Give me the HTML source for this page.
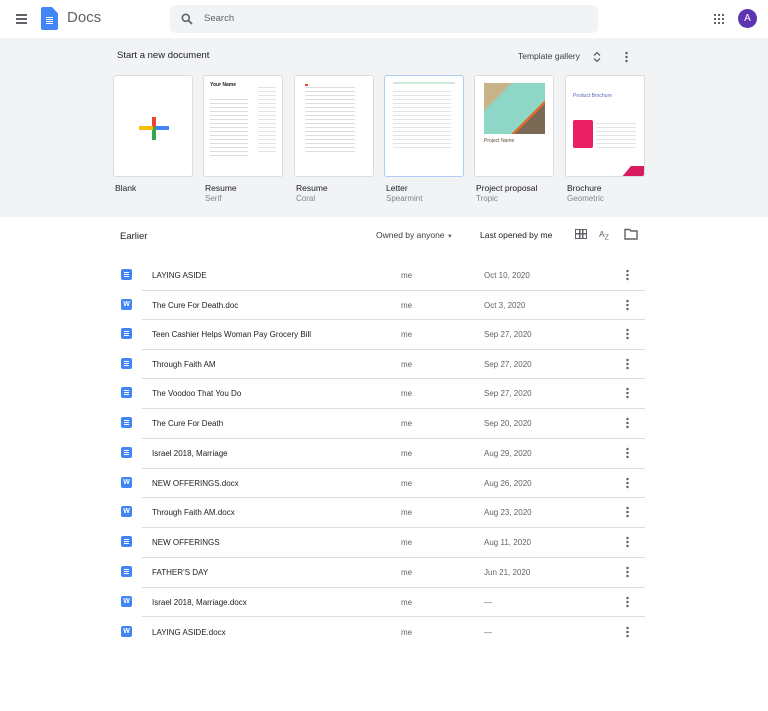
<!DOCTYPE html>
<html><head><style>
*{margin:0;padding:0;box-sizing:border-box}
body{width:768px;height:711px;background:#fff;font-family:"Liberation Sans",Arial,sans-serif;position:relative;overflow:hidden;color:#202124}
.a{position:absolute}
.hdr{left:0;top:0;width:768px;height:38px;background:#fff}
.gray{left:0;top:38px;width:768px;height:179px;background:#f1f3f4}
.card{top:75px;width:80px;height:102px;background:#fff;border:1px solid #dadce0;border-radius:3px;overflow:hidden}
.lbl{font-size:8.5px;color:#202124;top:183px}
.sub{font-size:8px;color:#80868b;top:194px}
.row{position:absolute;left:0;width:768px;height:29px;font-size:8px}
.row .n{position:absolute;left:152px;top:-4px;color:#202124}
.row .m{position:absolute;left:401px;top:-4px;color:#5f6368}
.row .d{position:absolute;left:484px;top:-4px;color:#5f6368}
.ic{position:absolute;left:121px;top:-6px;width:11px;height:11px;border-radius:2px;background:#4285f4;color:#fff;font-size:7px;text-align:center;line-height:11px;font-weight:bold}
.ic.g::after{content:"";position:absolute;left:3px;top:3px;width:5px;height:1px;background:#fff;box-shadow:0 2px 0 #fff,0 4px 0 #fff}
.dots{position:absolute;left:626px;top:-6px;width:3px;height:12px;background:radial-gradient(circle,#5f6368 1.1px,transparent 1.4px) 0 0/3px 4px}
.tl{height:1px;background:#ddd;position:absolute}
</style></head><body>
<div class="a hdr"></div>
<div class="a" style="left:16px;top:14px;width:11px;height:2px;background:#5f6368;box-shadow:0 4px 0 #5f6368,0 8px 0 #5f6368"></div>
<div class="a" style="left:41px;top:7px;width:17px;height:23px;background:#4285f4;border-radius:2px;clip-path:polygon(0 0,65% 0,100% 28%,100% 100%,0 100%)"></div>
<div class="a" style="left:46px;top:17px;width:7px;height:1px;background:#fff;box-shadow:0 2px 0 #fff,0 4px 0 #fff,0 6px 0 #fff"></div>
<div class="a" style="left:67px;top:9px;font-size:15px;color:#5f6368">Docs</div>
<div class="a" style="left:170px;top:5px;width:428px;height:28px;background:#f1f3f4;border-radius:6px"></div>
<svg class="a" style="left:181px;top:13px" width="12" height="12" viewBox="0 0 12 12"><circle cx="4.8" cy="4.8" r="3.5" fill="none" stroke="#5f6368" stroke-width="1.6"/><path d="M7.5 7.5L11 11" stroke="#5f6368" stroke-width="1.8"/></svg>
<div class="a" style="left:204px;top:13px;font-size:9.5px;color:#5f6368">Search</div>
<div class="a" style="left:714px;top:14px;width:2px;height:2px;background:#5f6368;box-shadow:4px 0 #5f6368,8px 0 #5f6368,0 4px #5f6368,4px 4px #5f6368,8px 4px #5f6368,0 8px #5f6368,4px 8px #5f6368,8px 8px #5f6368"></div>
<div class="a" style="left:738px;top:9px;width:19px;height:19px;border-radius:50%;background:#5e35b1;color:#fff;font-size:10px;text-align:center;line-height:19px">A</div>

<div class="a gray"></div>
<div class="a" style="left:117px;top:50px;font-size:9.5px">Start a new document</div>
<div class="a" style="left:518px;top:51px;font-size:8.5px;color:#3c4043">Template gallery</div>
<svg class="a" style="left:593px;top:51px" width="8" height="12" viewBox="0 0 8 12"><path d="M1 4.5L4 1.5 7 4.5M1 7.5L4 10.5 7 7.5" fill="none" stroke="#5f6368" stroke-width="1.3"/></svg>
<div class="a dots" style="left:625px;top:51px"></div>

<div class="a card" style="left:113px"><div class="a" style="left:38px;top:41px;width:4px;height:13px;background:#ea4335"></div><div class="a" style="left:38px;top:51px;width:4px;height:13px;background:#34a853"></div><div class="a" style="left:25px;top:50px;width:14px;height:4px;background:#fbbc04"></div><div class="a" style="left:42px;top:50px;width:13px;height:4px;background:#4285f4"></div></div>
<div class="a card" style="left:203px"><div class="a" style="left:6px;top:6px;font-size:5px;font-weight:bold">Your Name</div><div class="a" style="left:6px;top:20px;width:38px;height:60px;background:repeating-linear-gradient(#fff 0 3px,#ddd 3px 4px)"></div><div class="a" style="left:54px;top:8px;width:18px;height:70px;background:repeating-linear-gradient(#fff 0 3px,#e3e3e3 3px 4px)"></div></div>
<div class="a card" style="left:294px"><div class="a" style="left:10px;top:8px;width:50px;height:70px;background:repeating-linear-gradient(#fff 0 3px,#ddd 3px 4px)"></div><div class="a" style="left:10px;top:8px;width:3px;height:2px;background:#ea4335"></div></div>
<div class="a card" style="left:384px;border-color:#aecbfa"><div class="a" style="left:8px;top:6px;width:62px;height:2px;background:#ccebd9"></div><div class="a" style="left:8px;top:12px;width:58px;height:60px;background:repeating-linear-gradient(#fff 0 3px,#e3e3e3 3px 4px)"></div></div>
<div class="a card" style="left:474px"><div class="a" style="left:9px;top:7px;width:61px;height:51px;background:linear-gradient(135deg,#c9b48a 0 25%,#8ed6c6 25% 70%,#e06a2a 70% 73%,#7a6a55 73%)"></div><div class="a" style="left:9px;top:62px;font-size:5px;color:#5a4a3a">Project Name</div></div>
<div class="a card" style="left:565px"><div class="a" style="left:7px;top:17px;font-size:5px;color:#5c6bc0">Product Brochure</div><div class="a" style="left:7px;top:44px;width:20px;height:28px;background:#e91e63;border-radius:2px"></div><div class="a" style="left:30px;top:44px;width:40px;height:30px;background:repeating-linear-gradient(#fff 0 3px,#e3e3e3 3px 4px)"></div><div class="a" style="left:55px;top:90px;width:25px;height:12px;background:#d81b60;clip-path:polygon(40% 0,100% 0,100% 100%,0 100%)"></div></div>

<div class="a lbl" style="left:115px">Blank</div>
<div class="a lbl" style="left:205px">Resume</div><div class="a sub" style="left:205px">Serif</div>
<div class="a lbl" style="left:296px">Resume</div><div class="a sub" style="left:296px">Coral</div>
<div class="a lbl" style="left:386px">Letter</div><div class="a sub" style="left:386px">Spearmint</div>
<div class="a lbl" style="left:476px">Project proposal</div><div class="a sub" style="left:476px">Tropic</div>
<div class="a lbl" style="left:567px">Brochure</div><div class="a sub" style="left:567px">Geometric</div>

<div class="a" style="left:120px;top:231px;font-size:9.5px">Earlier</div>
<div class="a" style="left:376px;top:230px;font-size:8.5px;color:#3c4043">Owned by anyone <span style="font-size:6px;color:#5f6368">▼</span></div>
<div class="a" style="left:480px;top:230px;font-size:8.5px">Last opened by me</div>
<div class="a" style="left:575px;top:229px;width:12px;height:10px;border:1.5px solid #5f6368;background:linear-gradient(#5f6368,#5f6368) 0 3px/100% 1.5px no-repeat,linear-gradient(#5f6368,#5f6368) 3px 0/1.5px 100% no-repeat,linear-gradient(#5f6368,#5f6368) 6px 0/1.5px 100% no-repeat"></div>
<div class="a" style="left:599px;top:229px;font-size:8.5px;color:#5f6368">A<sub style="font-size:7px">Z</sub></div>
<svg class="a" style="left:624px;top:228px" width="14" height="12" viewBox="0 0 14 12"><path d="M1 1.5H5.5L7 3H13V11H1Z" fill="none" stroke="#5f6368" stroke-width="1.4"/></svg>

<div class="row" style="top:275px"><div class="ic g"></div><div class="n">LAYING ASIDE</div><div class="m">me</div><div class="d">Oct 10, 2020</div><div class="dots"></div></div>
<div class="row" style="top:305px"><div class="ic">W</div><div class="n">The Cure For Death.doc</div><div class="m">me</div><div class="d">Oct 3, 2020</div><div class="dots"></div></div>
<div class="row" style="top:334px"><div class="ic g"></div><div class="n">Teen Cashier Helps Woman Pay Grocery Bill</div><div class="m">me</div><div class="d">Sep 27, 2020</div><div class="dots"></div></div>
<div class="row" style="top:364px"><div class="ic g"></div><div class="n">Through Faith AM</div><div class="m">me</div><div class="d">Sep 27, 2020</div><div class="dots"></div></div>
<div class="row" style="top:393px"><div class="ic g"></div><div class="n">The Voodoo That You Do</div><div class="m">me</div><div class="d">Sep 27, 2020</div><div class="dots"></div></div>
<div class="row" style="top:423px"><div class="ic g"></div><div class="n">The Cure For Death</div><div class="m">me</div><div class="d">Sep 20, 2020</div><div class="dots"></div></div>
<div class="row" style="top:453px"><div class="ic g"></div><div class="n">Israel 2018, Marriage</div><div class="m">me</div><div class="d">Aug 29, 2020</div><div class="dots"></div></div>
<div class="row" style="top:483px"><div class="ic">W</div><div class="n">NEW OFFERINGS.docx</div><div class="m">me</div><div class="d">Aug 26, 2020</div><div class="dots"></div></div>
<div class="row" style="top:512px"><div class="ic">W</div><div class="n">Through Faith AM.docx</div><div class="m">me</div><div class="d">Aug 23, 2020</div><div class="dots"></div></div>
<div class="row" style="top:542px"><div class="ic g"></div><div class="n">NEW OFFERINGS</div><div class="m">me</div><div class="d">Aug 11, 2020</div><div class="dots"></div></div>
<div class="row" style="top:572px"><div class="ic g"></div><div class="n">FATHER’S DAY</div><div class="m">me</div><div class="d">Jun 21, 2020</div><div class="dots"></div></div>
<div class="row" style="top:602px"><div class="ic">W</div><div class="n">Israel 2018, Marriage.docx</div><div class="m">me</div><div class="d">—</div><div class="dots"></div></div>
<div class="row" style="top:632px"><div class="ic">W</div><div class="n">LAYING ASIDE.docx</div><div class="m">me</div><div class="d">—</div><div class="dots"></div></div>

<div class="tl" style="left:142px;width:503px;top:290px"></div>
<div class="tl" style="left:142px;width:503px;top:319px"></div>
<div class="tl" style="left:142px;width:503px;top:349px"></div>
<div class="tl" style="left:142px;width:503px;top:378px"></div>
<div class="tl" style="left:142px;width:503px;top:408px"></div>
<div class="tl" style="left:142px;width:503px;top:438px"></div>
<div class="tl" style="left:142px;width:503px;top:468px"></div>
<div class="tl" style="left:142px;width:503px;top:497px"></div>
<div class="tl" style="left:142px;width:503px;top:527px"></div>
<div class="tl" style="left:142px;width:503px;top:557px"></div>
<div class="tl" style="left:142px;width:503px;top:587px"></div>
<div class="tl" style="left:142px;width:503px;top:616px"></div>
</body></html>
